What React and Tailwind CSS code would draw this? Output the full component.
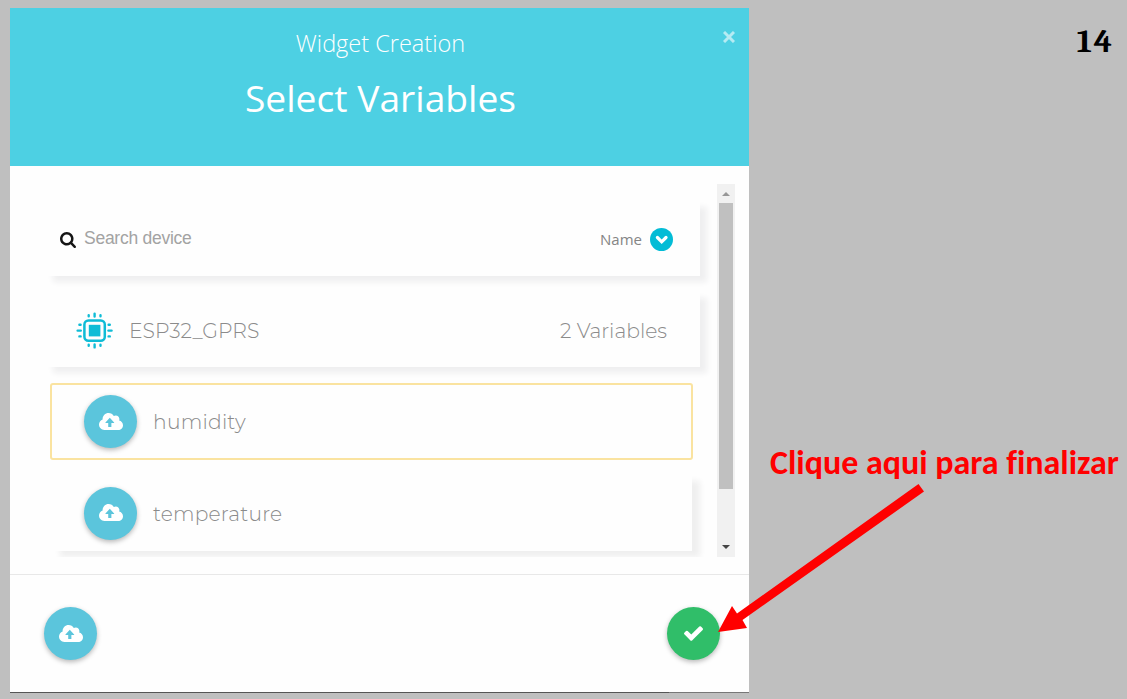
import React from "react";

const CLOUD =
  "M537.6 226.6c4.1-10.7 6.4-22.4 6.4-34.6 0-53-43-96-96-96-19.7 0-38.1 6-53.3 16.2C367 64.2 315.3 32 256 32c-88.4 0-160 71.6-160 160 0 2.7.1 5.4.2 8.1C40.2 219.8 0 273.2 0 336c0 79.5 64.5 144 144 144h368c70.7 0 128-57.3 128-128 0-61.9-44-113.6-102.4-125.4z";
const CHECK =
  "M1671 566q0 40-28 68l-724 724-136 136q-28 28-68 28t-68-28l-136-136-362-362q-28-28-28-68t28-68l136-136q28-28 68-28t68 28l294 295 656-657q28-28 68-28t68 28l136 136q28 28 28 68z";
const SEARCH =
  "M1216 832q0-185-131.5-316.5t-316.5-131.5-316.5 131.5-131.5 316.5 131.5 316.5 316.5 131.5 316.5-131.5 131.5-316.5zm512 832q0 52-38 90t-90 38q-54 0-90-38l-343-342q-179 124-399 124-143 0-273.5-55.5t-225-150-150-225-55.5-273.5 55.5-273.5 150-225 225-150 273.5-55.5 273.5 55.5 225 150 150 225 55.5 273.5q0 220-124 399l343 343q37 37 37 90z";

function CloudButton() {
  return (
    <button className="flex size-[53px] shrink-0 items-center justify-center rounded-full bg-[#5bc5dc] shadow-[0_2px_5px_rgba(0,0,0,0.28)]">
      <svg viewBox="0 32 640 448" className="mb-px h-[17px] w-[24px]" preserveAspectRatio="none">
        <path d={CLOUD} fill="#fff" />
        <path d="M288 160L404 280V296H330V400H246V296H172V280Z" fill="#5bc5dc" />
      </svg>
    </button>
  );
}

function Chip() {
  return (
    <svg viewBox="0 0 37 37" className="mt-px size-[37px] shrink-0" fill="none" stroke="#0fbcd6" strokeLinecap="round">
      <rect x="8.4" y="8.4" width="20.4" height="20.4" rx="4" strokeWidth="2.5" />
      <rect x="12.8" y="12.8" width="11.6" height="11.6" fill="#0fbcd6" stroke="none" />
      <path
        strokeWidth="2.4"
        d="M12.7 3.2v1M18.6 1.6v3M24.5 3.2v1M12.7 32.8v1M18.6 32.4v3M24.5 32.8v1M3.4 12.8h1.2M1.6 18.6h3.2M3.4 24.4h1.2M32.6 12.8h1.2M32.4 18.6h3.2M32.6 24.4h1.2"
      />
    </svg>
  );
}

export default function App() {
  return (
    <div className="relative flex h-[699px] w-[1127px] overflow-hidden bg-[#bfbfbf] pt-2 pl-2.5 font-['Open_Sans',sans-serif]">
      <main className="flex h-[685px] w-[739px] shrink-0 flex-col bg-[#fefefe]">
        <header className="flex h-[158px] shrink-0 flex-col items-center bg-[#4dd0e3] text-white">
          <div className="flex w-full items-start justify-between pr-[14px] pl-[15px]">
            <span className="w-[13px]" />
            <h2 className="mt-[18px] text-[23.5px] leading-[34px] font-light text-white">Widget Creation</h2>
            <button aria-label="Close" className="mt-[23px] size-[12px] text-[#b5ebf3]">
              <svg viewBox="0 0 12 12" className="size-[12px]" stroke="currentColor" strokeWidth="3">
                <path d="M1 1l10 10M11 1L1 11" />
              </svg>
            </button>
          </div>
          <h1 className="mt-[11px] pl-[2px] text-[37.2px] leading-[54px]">Select Variables</h1>
        </header>
        <section className="mt-[18px] flex h-[373px] shrink-0 justify-between overflow-hidden pr-[14px] pl-[36px]">
          <div className="flex h-full w-[671px] flex-col overflow-hidden pt-[17px]">
            <div className="flex h-[75px] w-[654px] shrink-0 items-center bg-[#fefefe] pl-[14px] shadow-[7px_6px_6px_#efeff0]">
              <svg viewBox="64 128 1664 1664" className="mt-[3px] size-[16px]" fill="#151515">
                <path d={SEARCH} />
              </svg>
              <span className="ml-[8px] font-['Liberation_Sans',sans-serif] text-[17.5px] tracking-[-0.26px] text-[#a3a3a3]">Search device</span>
              <span className="mt-[2px] ml-auto text-[15px] text-[#858585]">Name</span>
              <svg viewBox="0 0 23 23" className="mt-[2px] mr-[27px] ml-[8px] size-[23px]" fill="none">
                <circle cx="11.5" cy="11.5" r="11.5" fill="#03bcd6" />
                <path d="M7.4 9.5l4.3 4.3 4.3-4.3" stroke="#fff" strokeWidth="3.2" strokeLinecap="round" />
              </svg>
            </div>
            <div className="mt-[16px] flex h-[75px] w-[654px] shrink-0 items-center bg-[#fefefe] pl-[30px] font-['Montserrat','Inter',sans-serif] text-[20.3px] font-light text-[#8b8b8b] shadow-[7px_6px_6px_#efeff0]">
              <Chip />
              <span className="mt-[3px] ml-[16px] tracking-[0.05px]">ESP32_GPRS</span>
              <span className="mt-[3px] mr-[33px] ml-auto">2 Variables</span>
            </div>
            <div className="mt-[16px] ml-[4px] flex h-[77px] w-[643px] shrink-0 items-center rounded-[3px] border-2 border-[#fae3a0] bg-[#fefefe] pl-[32px] font-['Montserrat','Inter',sans-serif] text-[20.3px] font-light text-[#8b8b8b]">
              <CloudButton />
              <span className="mt-[2px] ml-[16px] tracking-[0.25px]">humidity</span>
            </div>
            <div className="mt-[15px] ml-[6px] flex h-[76px] w-[640px] shrink-0 items-center bg-[#fefefe] pl-[32px] font-['Montserrat','Inter',sans-serif] text-[20.2px] font-light text-[#8b8b8b] shadow-[8px_6px_6px_#efefef]">
              <CloudButton />
              <span className="mt-[2px] ml-[16px] tracking-[0.2px]">temperature</span>
            </div>
          </div>
          <div className="flex h-full w-[18px] flex-col items-center bg-[#f1f1f1]">
            <svg viewBox="0 0 18 19" className="h-[19px] w-[18px] shrink-0">
              <path d="M5 12l4-4 4 4z" fill="#979797" />
            </svg>
            <div className="h-[286px] w-[14px] bg-[#c0c0c0]" />
            <svg viewBox="0 0 18 19" className="mt-auto h-[19px] w-[18px] shrink-0">
              <path d="M5 7l4 4 4-4z" fill="#454545" />
            </svg>
          </div>
        </section>
        <footer className="mt-[17px] flex h-[118px] shrink-0 items-center justify-between border-t border-[#e8e8e8] pr-[29px] pl-[34px]">
          <CloudButton />
          <button aria-label="Confirm" className="flex size-[53px] items-center justify-center rounded-full bg-[#30be69] shadow-[0_2px_5px_rgba(0,0,0,0.28)]">
            <svg viewBox="121 334 1550 1188" className="h-[15px] w-[19px]" fill="#fff">
              <path d={CHECK} />
            </svg>
          </button>
        </footer>
        <div className="flex h-px shrink-0 bg-[#777]">
          <div className="w-[659px] bg-[#555]" />
        </div>
      </main>
      <aside className="flex flex-1 flex-col">
        <p className="mt-[13px] mr-[13px] self-end font-['Cambria','Caladea','Noto_Serif',serif] text-[33px] leading-[40px] font-bold tracking-[2px] text-black">14</p>
        <p className="mt-[380px] ml-[21px] font-['Calibri','Carlito','Lato',sans-serif] text-[34px] leading-[44px] font-bold whitespace-nowrap text-[#ff0000] [font-variant-ligatures:none]">
          Clique aqui para finalizar
        </p>
      </aside>
      <svg viewBox="0 0 1127 699" className="pointer-events-none absolute inset-0 h-[699px] w-[1127px]" fill="#ff0000">
        <path d="M918.5 484L924 491.5L742.5 620L747 628L718 632L732 606L737 613.5Z" />
      </svg>
    </div>
  );
}
